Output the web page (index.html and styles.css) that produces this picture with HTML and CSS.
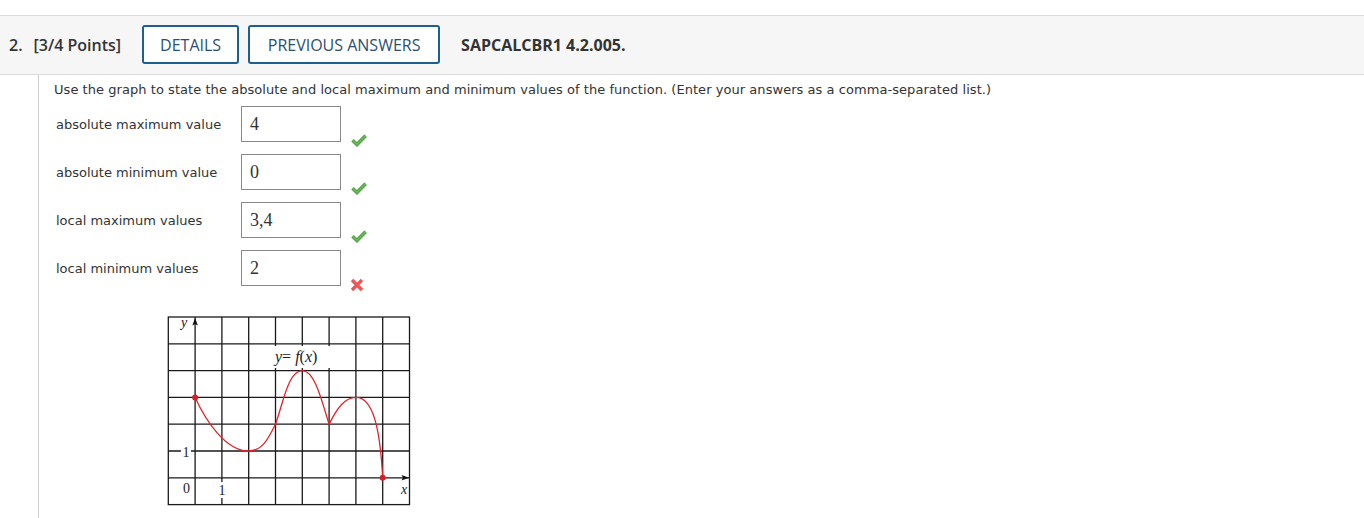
FILE: index.html
```html
<!DOCTYPE html>
<html>
<head>
<meta charset="utf-8">
<link rel="stylesheet" href="styles.css">
</head>
<body>
<div class="question-header">
  <span class="qnum">2.</span>
  <span class="points">[3/4 Points]</span>
  <button class="hbtn btn-details">DETAILS</button>
  <button class="hbtn btn-prev">PREVIOUS ANSWERS</button>
  <span class="qref">SAPCALCBR1 4.2.005.</span>
</div>
<div class="question-body">
  <p class="prompt">Use the graph to state the absolute and local maximum and minimum values of the function. (Enter your answers as a comma-separated list.)</p>
  <div class="answers">
    <div class="row">
      <span class="label">absolute maximum value</span>
      <div class="answer-box">4</div>
      <svg class="mark" width="16" height="13" viewBox="0 0 16 13"><path d="M1.5 6.2 L6 10.5 L14.6 1.8" fill="none" stroke="#4e9d43" stroke-width="3.6"/><path d="M1.5 6.2 L6 10.5 L14.6 1.8" fill="none" stroke="#6dbb5e" stroke-width="1.6"/></svg>
    </div>
    <div class="row">
      <span class="label">absolute minimum value</span>
      <div class="answer-box">0</div>
      <svg class="mark" width="16" height="13" viewBox="0 0 16 13"><path d="M1.5 6.2 L6 10.5 L14.6 1.8" fill="none" stroke="#4e9d43" stroke-width="3.6"/><path d="M1.5 6.2 L6 10.5 L14.6 1.8" fill="none" stroke="#6dbb5e" stroke-width="1.6"/></svg>
    </div>
    <div class="row">
      <span class="label">local maximum values</span>
      <div class="answer-box">3,4</div>
      <svg class="mark" width="16" height="13" viewBox="0 0 16 13"><path d="M1.5 6.2 L6 10.5 L14.6 1.8" fill="none" stroke="#4e9d43" stroke-width="3.6"/><path d="M1.5 6.2 L6 10.5 L14.6 1.8" fill="none" stroke="#6dbb5e" stroke-width="1.6"/></svg>
    </div>
    <div class="row">
      <span class="label">local minimum values</span>
      <div class="answer-box">2</div>
      <svg class="mark mark-x" width="14" height="14" viewBox="0 0 14 14"><path d="M2 2 L12 12 M12 2 L2 12" fill="none" stroke="#ef5555" stroke-width="3.4"/></svg>
    </div>
  </div>
  <svg class="graph" width="245" height="191" viewBox="0 0 245 191">
    <g stroke="#1a1a1a" stroke-width="1.3" fill="none">
      <rect x="1.3" y="1" width="241.2" height="187.6"/>
      <path d="M28.1 1 V188.6 M54.9 1 V188.6 M81.7 1 V188.6 M108.5 1 V188.6 M135.3 1 V188.6 M162.1 1 V188.6 M188.9 1 V188.6 M215.7 1 V188.6"/>
      <path d="M1.3 27.8 H242.5 M1.3 54.6 H242.5 M1.3 81.4 H242.5 M1.3 108.2 H242.5 M1.3 135 H242.5 M1.3 161.8 H242.5"/>
    </g>
    <rect x="106" y="30" width="59" height="22" fill="#fff"/>
    <rect x="14" y="128" width="10" height="15" fill="#fff"/>
    <rect x="50" y="166" width="10" height="16" fill="#fff"/>
    <path d="M28.1 2 L25.3 9.5 L28.1 8 L30.9 9.5 Z" fill="#111"/>
    <path d="M242 161.8 L234.5 159 L236 161.8 L234.5 164.6 Z" fill="#111"/>
    <text class="gt gi" x="14" y="11">y</text>
    <text class="gt gi glabel" x="108" y="46">y<tspan class="gu">= </tspan>f<tspan class="gu">(</tspan>x<tspan class="gu">)</tspan></text>
    <text class="gt" x="15.5" y="141">1</text>
    <text class="gt" x="16" y="177">0</text>
    <text class="gt" x="51.5" y="179">1</text>
    <text class="gt gi" x="234" y="178">x</text>
    <path d="M28.1 81.4 C38 103 58 135 81.7 135 C96 135 102 121 108.5 108.2 C116 88 121 54.6 135.3 54.6 C148 54.6 155 86 162.1 108.2 C170 92 178 81.4 188.9 81.4 C206 81.4 213 112 215.7 161.8" fill="none" stroke="#e3232b" stroke-width="1.3"/>
    <circle cx="28.1" cy="81.4" r="3" fill="#d42026"/>
    <circle cx="215.7" cy="161.8" r="3" fill="#d42026"/>
  </svg>
</div>
</body>
</html>
```
FILE: styles.css
```css
html, body {
  margin: 0;
  padding: 0;
  background: #fff;
}
body {
  font-family: "DejaVu Sans", Verdana, sans-serif;
  color: #333;
}
.question-header {
  margin-top: 15px;
  height: 58px;
  border-top: 1px solid #dcdcdc;
  border-bottom: 1px solid #dcdcdc;
  background: #f6f6f6;
  display: flex;
  align-items: center;
  padding-left: 9px;
  font-family: "Open Sans", sans-serif;
  font-size: 16px;
  font-weight: 600;
  color: #333;
}
.qnum {
  margin-right: 11px;
}
.points {
  margin-right: 21px;
}
.hbtn {
  height: 39px;
  box-sizing: border-box;
  border: 2px solid #1d5f8e;
  border-radius: 3px;
  background: #fff;
  color: #2a4f72;
  font-family: "Open Sans", sans-serif;
  font-size: 16px;
  font-weight: 400;
  padding: 0;
  margin-top: -1px;
}
.btn-details {
  width: 97px;
  margin-right: 9px;
}
.btn-prev {
  width: 192px;
  margin-right: 21px;
}
.qref {
  font-weight: 700;
}
.question-body {
  margin-left: 38px;
  border-left: 1px solid #cfcfcf;
  padding: 7px 0 14px 15px;
  min-height: 420px;
}
.prompt {
  margin: 0;
  font-size: 13px;
  line-height: 16px;
  color: #333;
  letter-spacing: 0.05px;
}
.answers {
  margin-top: 8px;
  margin-left: 2px;
}
.row {
  display: flex;
  align-items: center;
  margin-bottom: 12px;
}
.label {
  width: 185px;
  font-size: 13px;
  color: #333;
}
.answer-box {
  width: 100px;
  height: 36px;
  box-sizing: border-box;
  border: 1px solid #8a8a8a;
  background: #fff;
  padding: 0 8px;
  font-family: "Liberation Serif", serif;
  font-size: 18px;
  line-height: 34px;
  color: #333;
}
.mark {
  align-self: flex-end;
  margin-left: 10px;
  margin-bottom: -5px;
}
.mark-x {
  margin-left: 9px;
  margin-bottom: -6px;
}
.graph {
  display: block;
  margin-left: 113px;
  margin-top: 30px;
}
.gt {
  font-family: "Liberation Serif", serif;
  font-size: 14px;
  fill: #222;
}
.glabel {
  font-size: 16px;
}
.gi {
  font-style: italic;
}
.gu {
  font-style: normal;
}
```
